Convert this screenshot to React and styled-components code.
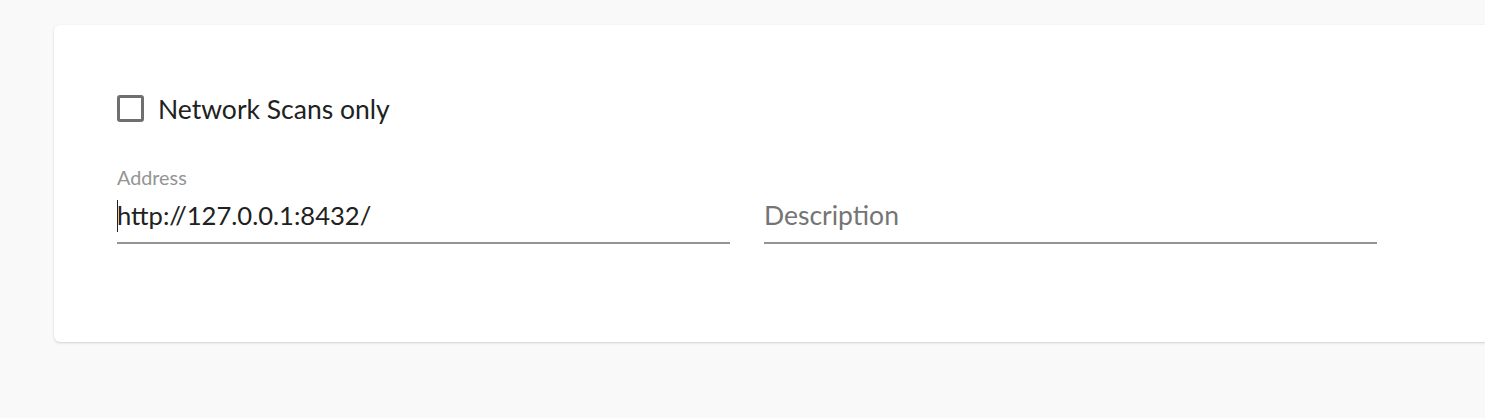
import React from "react";
import styled, { createGlobalStyle } from "styled-components";

const Global = createGlobalStyle`
  html, body {
    margin: 0;
    padding: 0;
    background: #f9f9f9;
    overflow: hidden;
    font-family: Lato, "Noto Sans", sans-serif;
  }
`;

const Page = styled.div`
  padding: 25px 0 0 54px;
  height: 418px;
  box-sizing: border-box;
`;

const Card = styled.section`
  width: 1500px;
  height: 317px;
  box-sizing: border-box;
  background: #ffffff;
  border-radius: 6px;
  box-shadow: 0 1px 3px rgba(0, 0, 0, 0.13), 0 1px 1px rgba(0, 0, 0, 0.04);
  padding: 70px 0 0 63px;
`;

const CheckRow = styled.label`
  display: flex;
  align-items: center;
  gap: 14px;
  height: 27px;
  cursor: pointer;
`;

const Box = styled.span`
  width: 27px;
  height: 27px;
  box-sizing: border-box;
  border: 3px solid #6f6f6f;
  border-radius: 3px;
  flex: none;
`;

const CheckText = styled.span`
  font-size: 26.5px;
  color: #212121;
  line-height: 1;
  margin-top: 1px;
`;

const Fields = styled.div`
  display: flex;
  gap: 34px;
  margin-top: 44px;
`;

const Field = styled.div`
  width: 613px;
  display: flex;
  flex-direction: column;
  position: relative;
`;

const Label = styled.span`
  font-size: 19.8px;
  line-height: 22px;
  color: #949494;
  height: 22px;
  visibility: ${(p) => (p.$hidden ? "hidden" : "visible")};
`;

const Input = styled.input`
  font-family: inherit;
  font-size: 25.6px;
  line-height: 31px;
  height: 56px;
  box-sizing: border-box;
  color: #212121;
  border: none;
  border-bottom: 2px solid #949494;
  outline: none;
  padding: 11px 0 12px;
  margin: 0;
  background: transparent;
  width: 100%;
  &::placeholder {
    color: #757575;
    opacity: 1;
    font-size: 26.5px;
  }
`;

const Caret = styled.span`
  position: absolute;
  left: 0;
  top: 34px;
  width: 1px;
  height: 32px;
  background: #212121;
`;

export default function App() {
  return (
    <>
      <Global />
      <Page>
        <Card>
          <CheckRow>
            <Box />
            <CheckText>Network Scans only</CheckText>
          </CheckRow>
          <Fields>
            <Field>
              <Label>Address</Label>
              <Input readOnly value="http://127.0.0.1:8432/" />
              <Caret />
            </Field>
            <Field>
              <Label $hidden>Description</Label>
              <Input readOnly placeholder="Description" />
            </Field>
          </Fields>
        </Card>
      </Page>
    </>
  );
}
